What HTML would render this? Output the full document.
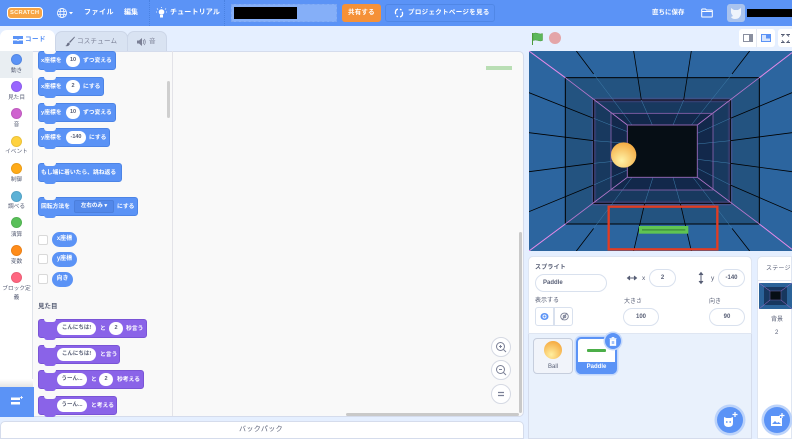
<!DOCTYPE html>
<html lang="ja"><head><meta charset="utf-8">
<style>
html,body{margin:0;padding:0;width:792px;height:439px;overflow:hidden;background:#e5efff}
body{position:relative;font-family:"Liberation Sans","Noto Sans CJK JP",sans-serif;color:#575e75;filter:blur(.3px)}
div,span.a{position:absolute;box-sizing:border-box}
.t{position:absolute;white-space:nowrap;line-height:10px;height:10px}
svg{position:absolute;overflow:visible}
.h{color:#fff;font-size:7px;font-weight:700;top:8px;letter-spacing:.5px}
.c{border-radius:50%;width:11px;height:11px;left:11px;border:1px solid rgba(0,0,0,.08)}
.l{font-size:5.700px;width:33px;left:0;text-align:center;color:#575e75}
.b{left:38px;height:19px;background:#5b93f6;border-radius:3px;border:1px solid #4c84e6;color:#fff;font-size:5.800px;font-weight:700}
.b:before{content:"";position:absolute;left:5px;top:-1px;width:12px;height:3px;background:#f9f9f9;border-radius:0 0 3px 3px}
.b:after{content:"";position:absolute;left:5px;bottom:-3px;width:12px;height:3px;background:#5b93f6;border-radius:0 0 4px 4px}
.p{background:#8a63e8;border-color:#7a54d6}
.p:after{background:#8a63e8}
.i{position:absolute;background:#fff;border-radius:7px;height:13px;top:2px;color:#575e75;font-size:5.500px;text-align:center;line-height:13px;font-weight:700}
.x{position:absolute;top:4px;line-height:10px;white-space:nowrap}
.cb{left:38px;width:10px;height:10px;background:#fff;border:1px solid #d9d9d9;border-radius:2px}
.r{left:52px;height:15px;background:#5b93f6;border-radius:8px;color:#fff;font-size:6px;font-weight:700;text-align:center;line-height:15px}
.z{left:491px;width:20px;height:20px;border-radius:50%;background:#fff;border:1px solid #d5d9e3}
.in{background:#fff;border:1px solid #d9e1ee;border-radius:9px;text-align:center;font-size:6px;line-height:16px;color:#575e75}
</style></head><body>

<!-- header -->
<div style="left:0;top:0;width:792px;height:26px;background:#5b93f6"></div>
<div style="left:7px;top:7px;width:36px;height:12px;background:#f7a444;border:1.500px solid #fff;border-radius:4px"></div>
<span class="t" style="left:10px;top:8px;font-size:5.800px;font-weight:700;color:#fff6e0;letter-spacing:.2px">SCRATCH</span>
<svg style="left:57px;top:8px" width="16" height="11" viewBox="0 0 16 11" fill="none" stroke="#fff" stroke-width=".8"><circle cx="5" cy="5" r="4.600"/><ellipse cx="5" cy="5" rx="2" ry="4.600"/><path d="M.5 3.500h9M.5 6.500h9"/><path d="M12 4h4l-2 2.400z" fill="#fff" stroke="none"/></svg>
<span class="t h" style="left:84px">ファイル</span>
<span class="t h" style="left:124px;letter-spacing:0">編集</span>
<div style="left:149px;top:0;width:0;height:26px;border-left:1px dotted #4a82e2"></div>
<svg style="left:156px;top:7px" width="11" height="12" viewBox="0 0 11 12"><circle cx="5.500" cy="5" r="2.800" fill="#fff"/><rect x="4" y="8" width="3" height="2.500" fill="#fff"/><path d="M5.500 0v1M1 1.500l1 1M10 1.500l-1 1M0 5h1M10 5h1" stroke="#fff" stroke-width=".8"/></svg>
<span class="t h" style="left:170px;letter-spacing:.15px">チュートリアル</span>
<div style="left:224px;top:0;width:0;height:26px;border-left:1px dotted #4a82e2"></div>
<div style="left:231px;top:4px;width:106px;height:18px;background:#85aff8;border:1px dashed #7aa5f2"></div>
<div style="left:234px;top:7px;width:63px;height:12px;background:#000"></div>
<div style="left:342px;top:4px;width:39px;height:18px;background:#f59138;border-radius:3px"></div>
<span class="t" style="left:348px;top:8px;font-size:6.500px;font-weight:700;color:#fff;letter-spacing:.2px">共有する</span>
<div style="left:385px;top:4px;width:110px;height:18px;border:1px solid #5087e6;border-radius:3px;background:#5b93f6"></div>
<svg style="left:394px;top:8px" width="10" height="10" viewBox="0 0 10 10" fill="none" stroke="#fff" stroke-width="1.300"><path d="M4 1.200C1.500 1.500 1 4 1.700 6.200M6 8.800c2.500-.3 3-2.800 2.300-5"/><path d="M6 1.200l1.500.8M4 8.800l-1.500-.8"/></svg>
<span class="t" style="left:408px;top:8px;font-size:6.500px;font-weight:700;color:#fff;letter-spacing:.32px">プロジェクトページを見る</span>
<span class="t h" style="left:652px;letter-spacing:0;font-size:6.500px">直ちに保存</span>
<svg style="left:701px;top:8px" width="12" height="10" viewBox="0 0 12 10" fill="none" stroke="#fff" stroke-width="1"><path d="M.7 1.800Q.7 1 1.500 1H4.500L5.500 2H10.500Q11.300 2 11.300 2.800V8.200Q11.300 9 10.500 9H1.500Q.7 9 .7 8.200ZM.7 3.500H11.300"/></svg>
<div style="left:727px;top:4px;width:18px;height:18px;background:#a9c3ee;border-radius:3px"></div>
<svg style="left:728px;top:5px" width="16" height="16" viewBox="0 0 16 16"><path d="M3 3l3 2h4l3-2v6q-1 5-6 5-3 0-4-2l2-1q-2-2-2-4z" fill="#eef3fb"/></svg>
<div style="left:747px;top:9px;width:45px;height:8px;background:#000"></div>

<!-- tabs -->
<div style="left:55px;top:31px;width:73px;height:21px;background:#d9e3f2;border:1px solid #ccd6e8;border-radius:7px 7px 0 0"></div>
<div style="left:127px;top:31px;width:40px;height:21px;background:#d9e3f2;border:1px solid #ccd6e8;border-radius:7px 7px 0 0"></div>
<div style="left:0;top:30px;width:55px;height:22px;background:#fff;border-radius:7px 7px 0 0"></div>
<svg style="left:13px;top:36px" width="10" height="8" viewBox="0 0 10 8"><path d="M0 0h10v3H6L5 4 4 3H0zM0 4.500h4l1 .8 1-.8h4V8H0z" fill="#5b93f6"/></svg>
<span class="t" style="left:25px;top:35px;font-size:6.500px;color:#5b93f6;letter-spacing:.5px;font-weight:700">コード</span>
<svg style="left:65px;top:36px" width="10" height="11" viewBox="0 0 10 11"><path d="M9.500.5L4 6 5 7l4.800-5.500zM3.500 6.500Q2 7 1.800 8.500 1.500 9.800.2 10q3 .8 4.300-1.200.6-1 .2-1.300z" fill="#6a7086"/></svg>
<span class="t" style="left:77px;top:37px;font-size:6.500px;color:#7b8096;letter-spacing:.25px">コスチューム</span>
<svg style="left:137px;top:38px" width="9" height="8" viewBox="0 0 9 8"><path d="M0 2.500h2L5 0v8L2 5.500H0z" fill="#7b8096"/><path d="M6 2q1.500 2 0 4M7.300 1q2 3 0 6" stroke="#7b8096" fill="none" stroke-width=".7"/></svg>
<span class="t" style="left:149px;top:37px;font-size:6.500px;color:#7b8096">音</span>

<!-- code area -->
<div style="left:0;top:51px;width:524px;height:366px;background:#f9f9f9;border:1px solid #d5dcec;border-radius:0 5px 5px 0"></div>
<div style="left:0;top:51px;width:33px;height:366px;background:#fff;border-right:1px solid #dfe3ea"></div>
<div style="left:0;top:51px;width:33px;height:27px;background:#e9eef2"></div>
<div style="left:172px;top:51px;width:1px;height:365px;background:#e3e3e8"></div>

<div class="c" style="top:54px;background:#5b93f6"></div><span class="t l" style="top:66px">動き</span>
<div class="c" style="top:81px;background:#9966ff"></div><span class="t l" style="top:93px">見た目</span>
<div class="c" style="top:108px;background:#cf63cf"></div><span class="t l" style="top:120px">音</span>
<div class="c" style="top:136px;background:#ffd23f"></div><span class="t l" style="top:147px">イベント</span>
<div class="c" style="top:163px;background:#ffab19"></div><span class="t l" style="top:175px">制御</span>
<div class="c" style="top:191px;background:#5cb1d6"></div><span class="t l" style="top:202px">調べる</span>
<div class="c" style="top:217px;background:#59c059"></div><span class="t l" style="top:230px">演算</span>
<div class="c" style="top:245px;background:#ff8c1a"></div><span class="t l" style="top:257px">変数</span>
<div class="c" style="top:272px;background:#ff6680"></div><span class="t l" style="top:284px">ブロック定</span><span class="t l" style="top:293px">義</span>

<!-- blocks -->
<div class="b" style="top:51px;width:78px"><span class="x" style="left:2px">x座標を</span><span class="i" style="left:27px;width:14px">10</span><span class="x" style="left:44px">ずつ変える</span></div>
<div class="b" style="top:77px;width:66px"><span class="x" style="left:2px">x座標を</span><span class="i" style="left:27px;width:14px">2</span><span class="x" style="left:44px">にする</span></div>
<div class="b" style="top:103px;width:78px"><span class="x" style="left:2px">y座標を</span><span class="i" style="left:27px;width:14px">10</span><span class="x" style="left:44px">ずつ変える</span></div>
<div class="b" style="top:128px;width:72px"><span class="x" style="left:2px">y座標を</span><span class="i" style="left:27px;width:20px">-140</span><span class="x" style="left:50px">にする</span></div>
<div class="b" style="top:163px;width:84px"><span class="x" style="left:2px;letter-spacing:-.02px">もし端に着いたら、跳ね返る</span></div>
<div class="b" style="top:197px;width:100px"><span class="x" style="left:2px">回転方法を</span><span class="a" style="left:35px;top:2px;width:40px;height:13px;background:#5288ea;border:1px solid #4c7fdc;border-radius:2px;line-height:11px;text-align:center;font-size:5.500px">左右のみ ▾</span><span class="x" style="left:78px">にする</span></div>

<div class="cb" style="top:235px"></div><div class="r" style="top:232px;width:25px">x座標</div>
<div class="cb" style="top:254px"></div><div class="r" style="top:252px;width:25px">y座標</div>
<div class="cb" style="top:274px"></div><div class="r" style="top:272px;width:21px">向き</div>

<span class="t" style="left:38px;top:302px;font-size:6.500px;font-weight:700;color:#575e75">見た目</span>

<div class="b p" style="top:319px;width:109px"><span class="i" style="left:18px;width:39px">こんにちは!</span><span class="x" style="left:61px">と</span><span class="i" style="left:70px;width:14px">2</span><span class="x" style="left:87px">秒言う</span></div>
<div class="b p" style="top:345px;width:82px"><span class="i" style="left:18px;width:39px">こんにちは!</span><span class="x" style="left:61px">と言う</span></div>
<div class="b p" style="top:370px;width:106px"><span class="i" style="left:18px;width:30px">うーん...</span><span class="x" style="left:52px">と</span><span class="i" style="left:60px;width:14px">2</span><span class="x" style="left:78px">秒考える</span></div>
<div class="b p" style="top:396px;width:79px"><span class="i" style="left:18px;width:30px">うーん...</span><span class="x" style="left:52px">と考える</span></div>

<div style="left:167px;top:81px;width:3px;height:37px;background:#cfcfcf;border-radius:2px"></div>
<div style="left:519px;top:232px;width:3px;height:181px;background:#c9c9c9;border-radius:2px"></div>
<div style="left:346px;top:413px;width:173px;height:3px;background:#c9c9c9;border-radius:2px"></div>
<div style="left:486px;top:66px;width:26px;height:4px;background:#b9deb4"></div>

<div class="z" style="top:337px"></div>
<svg style="left:494px;top:340px" width="14" height="14" viewBox="0 0 14 14" fill="none" stroke="#7b8096" stroke-width="1"><circle cx="6.500" cy="6.500" r="4"/><path d="M9.500 9.500l2.500 2.500M5 6.500h3M6.500 5v3"/></svg>
<div class="z" style="top:360px"></div>
<svg style="left:494px;top:363px" width="14" height="14" viewBox="0 0 14 14" fill="none" stroke="#7b8096" stroke-width="1"><circle cx="6.500" cy="6.500" r="4"/><path d="M9.500 9.500l2.500 2.500M5 6.500h3"/></svg>
<div class="z" style="top:384px"></div>
<svg style="left:494px;top:387px" width="14" height="14" viewBox="0 0 14 14" fill="none" stroke="#7b8096" stroke-width="1.200"><path d="M4 5.500h6M4 8.500h6"/></svg>

<div style="left:0;top:379px;width:33px;height:8px;background:linear-gradient(#fff,#e4e4e4)"></div>
<div style="left:0;top:387px;width:34px;height:30px;background:#5b93f6"></div>
<svg style="left:10px;top:396px" width="14" height="12" viewBox="0 0 14 12"><path d="M1 1.500h9v2.500H1zM1 6h9v2.500H1z" fill="#fff"/><path d="M11.500 0v3M10 1.500h3" stroke="#fff" stroke-width=".8"/></svg>

<!-- backpack -->
<div style="left:0;top:421px;width:524px;height:18px;background:#fff;border:1px solid #d5dcec;border-radius:5px 5px 0 0"></div>
<span class="t" style="left:239px;top:425px;font-size:7px;color:#575e75;letter-spacing:.4px">バックパック</span>

<!-- stage controls -->
<svg style="left:531px;top:32px" width="13" height="13" viewBox="0 0 13 13"><path d="M1.500 1v12" stroke="#4c9a3c" stroke-width="1"/><path d="M2 1.500q2.500-1 5 0t4.500 0v7q-2 1-4.500 0t-5 0z" fill="#5cb85c" stroke="#4c9a3c" stroke-width=".5"/></svg>
<div style="left:549px;top:32px;width:12px;height:12px;border-radius:50%;background:#e4a5a8"></div>
<div style="left:739px;top:29px;width:18px;height:18px;background:#fff;border-radius:3px 0 0 3px;border-right:1px solid #e5e9f2"></div>
<svg style="left:743px;top:34px" width="10" height="8" viewBox="0 0 10 8"><rect x=".5" y=".5" width="9" height="7" fill="#fff" stroke="#8a8f9f"/><rect x="6" y="1" width="3" height="6" fill="#8a8f9f"/></svg>
<div style="left:757px;top:29px;width:18px;height:18px;background:#fff;border-radius:0 3px 3px 0"></div>
<svg style="left:761px;top:34px" width="10" height="8" viewBox="0 0 10 8"><rect x=".5" y=".5" width="9" height="7" fill="#d7e5fd" stroke="#5b93f6"/><rect x="5" y="1" width="4" height="3.500" fill="#5b93f6"/></svg>
<div style="left:778px;top:29px;width:14px;height:18px;background:#fff;border-radius:3px 0 0 3px"></div>
<svg style="left:781px;top:34px" width="9" height="9" viewBox="0 0 9 9" fill="none" stroke="#575e75" stroke-width="1"><path d="M0 .5h3L1 2.500M9 .5H6l2 2M0 8.500h3L1 6.500M9 8.500H6l2-2"/></svg>

<!-- stage -->
<div style="left:529px;top:51px;width:263px;height:200px;background:#2b6399;overflow:hidden">
<svg style="left:-1px;top:-1px" width="264" height="205" viewBox="0 0 792 615">
<defs><radialGradient id="bg" cx=".42" cy=".72" r=".75"><stop offset="0" stop-color="#fff2a6"/><stop offset="1" stop-color="#f4a83f"/></radialGradient>
<filter id="gl"><feGaussianBlur stdDeviation="3"/></filter></defs>
<rect width="792" height="615" fill="#2c659f"/>
<rect x="112" y="83" width="582" height="439" fill="#235380"/>
<rect x="197" y="150" width="410" height="310" fill="#18395f"/>
<rect x="249" y="190" width="306" height="230" fill="#12284b"/>
<g fill="none" stroke="#6f4f9a" stroke-width="6" filter="url(#gl)"><rect x="197" y="150" width="410" height="310"/></g>
<g stroke="#000" stroke-width="2.400" fill="none">
<path d="M145 3L197 72M317 3L340 150M490 3L467 150M665 3L612 72"/>
<path d="M3 128L197 205M3 248L197 272M3 365L197 340M3 485L197 405"/>
<path d="M792 128L607 205M792 248L607 272M792 365L607 340M792 485L607 405"/>
<path d="M145 603L197 535M317 603L350 460M490 603L457 460M665 603L612 535"/>
<rect x="112" y="83" width="582" height="439" stroke-width="3"/>
<rect x="197" y="150" width="410" height="310" stroke-width="3"/>
</g>
<g stroke="#3f7fae" stroke-width="1.500" fill="none">
<path d="M197 72L312 225M340 150L373 225M467 150L435 225M612 72L490 225"/>
<path d="M197 205L298 245M197 272L298 280M197 340L298 330M197 405L298 360"/>
<path d="M607 205L508 250M607 272L508 282M607 340L508 328M607 405L508 355"/>
<path d="M197 535L312 382M350 460L375 382M457 460L435 382M612 535L495 382"/>
</g>
<g stroke="#e68ae8" stroke-width="3" fill="none"><path d="M3 3L112 83M792 8L694 83M3 603L112 522M792 598L694 522"/></g>
<g stroke="#b577cc" stroke-width="2.500" fill="none"><path d="M112 83L298 225M694 83L508 225M112 522L298 382M694 522L508 382"/></g>
<rect x="249" y="190" width="306" height="230" fill="none" stroke="#8a63ae" stroke-width="2.500"/>
<rect x="298" y="225" width="210" height="157" fill="#060e15" stroke="#8a63ae" stroke-width="3"/>
<circle cx="287" cy="315" r="38" fill="url(#bg)"/>
<rect x="333" y="528" width="148" height="23" fill="#5fc452"/>
<rect x="342" y="537" width="130" height="5" fill="#44993f"/>
<rect x="242" y="470" width="326" height="128" fill="none" stroke="#e23c22" stroke-width="7"/>
</svg></div>

<!-- sprite panel -->
<div style="left:528px;top:256px;width:224px;height:183px;background:#e9f1fc;border:1px solid #d5dcec;border-radius:5px 5px 0 0"></div>
<div style="left:528px;top:256px;width:224px;height:78px;background:#fff;border:1px solid #dfe6f2;border-radius:5px 5px 0 0"></div>
<span class="t" style="left:535px;top:263px;font-size:6px;font-weight:700;color:#575e75;letter-spacing:.2px">スプライト</span>
<div class="in" style="left:535px;top:274px;width:72px;height:18px;text-align:left;padding-left:7px;font-weight:700">Paddle</div>
<svg style="left:627px;top:274px" width="10" height="8" viewBox="0 0 10 8"><path d="M.5 4h9M3 2L.5 4 3 6M7 2l2.500 2L7 6" stroke="#575e75" fill="#575e75" stroke-width="1"/></svg>
<span class="t" style="left:642px;top:274px;font-size:6.500px">x</span>
<div class="in" style="left:649px;top:269px;width:27px;height:18px;font-weight:700">2</div>
<svg style="left:697px;top:272px" width="8" height="12" viewBox="0 0 8 12"><path d="M4 .5v11M2 3l2-2.500L6 3M2 9l2 2.500L6 9" stroke="#575e75" fill="#575e75" stroke-width="1"/></svg>
<span class="t" style="left:711px;top:274px;font-size:6.500px">y</span>
<div class="in" style="left:718px;top:269px;width:27px;height:18px;font-weight:700">-140</div>
<span class="t" style="left:535px;top:296px;font-size:6px">表示する</span>
<span class="t" style="left:624px;top:297px;font-size:6px">大きさ</span>
<span class="t" style="left:709px;top:297px;font-size:6px">向き</span>
<div style="left:535px;top:307px;width:19px;height:19px;background:#fff;border:1px solid #d9e1ee;border-radius:3px 0 0 3px"></div>
<div style="left:554px;top:307px;width:19px;height:19px;background:#fff;border:1px solid #d9e1ee;border-radius:0 3px 3px 0"></div>
<svg style="left:540px;top:312px" width="9" height="9" viewBox="0 0 9 9"><ellipse cx="4.500" cy="4.500" rx="4" ry="3.500" fill="#5b93f6"/><circle cx="4.500" cy="4.500" r="2" fill="#fff"/><circle cx="4.500" cy="4.500" r="1.100" fill="#5b93f6"/></svg>
<svg style="left:560px;top:312px" width="9" height="9" viewBox="0 0 9 9" fill="none" stroke="#7b8096" stroke-width=".9"><ellipse cx="4.500" cy="4.500" rx="3.800" ry="3.400"/><circle cx="4.500" cy="4.500" r="1.300"/><path d="M7 1L2 8"/></svg>
<div class="in" style="left:623px;top:308px;width:36px;height:18px;font-weight:700">100</div>
<div class="in" style="left:709px;top:308px;width:36px;height:18px;font-weight:700">90</div>

<!-- sprite tiles -->
<div style="left:533px;top:338px;width:40px;height:36px;background:#f1f4fa;border:1px solid #c6cedd;border-radius:4px"></div>
<svg style="left:544px;top:341px" width="18" height="18" viewBox="0 0 18 18"><defs><radialGradient id="bs" cx=".4" cy=".75" r=".8"><stop offset="0" stop-color="#ffefa0"/><stop offset="1" stop-color="#f5a63c"/></radialGradient></defs><circle cx="9" cy="9" r="9" fill="url(#bs)"/></svg>
<span class="t" style="left:533px;top:362px;width:40px;text-align:center;font-size:6px">Ball</span>
<div style="left:576px;top:337px;width:41px;height:37px;background:#fff;border:2px solid #5b93f6;border-radius:5px;box-shadow:0 0 0 1.500px #c5d9fb"></div>
<div style="left:577px;top:362px;width:39px;height:12px;background:#5b93f6;border-radius:0 0 4px 4px"></div>
<span class="t" style="left:576px;top:362px;width:41px;text-align:center;font-size:6px;color:#fff;font-weight:700">Paddle</span>
<div style="left:587px;top:349px;width:19px;height:3px;background:#4cae49;border-radius:1px"></div>
<div style="left:605px;top:333px;width:16px;height:16px;background:#5b93f6;border-radius:50%;box-shadow:0 0 0 1.500px #c5d9fb"></div>
<svg style="left:609px;top:337px" width="8" height="9" viewBox="0 0 8 9"><path d="M.5 1.500h7M3 1.500V.5h2v1M1.200 2.500h5.600V8.500H1.200z" stroke="#fff" fill="#fff" stroke-width=".7"/><path d="M3.200 4v3M4.800 4v3" stroke="#5b93f6" stroke-width=".7"/></svg>

<div style="left:717px;top:407px;width:26px;height:26px;background:#5b93f6;border-radius:50%;box-shadow:0 0 0 2.500px #bcd3fa"></div>
<svg style="left:723px;top:412px" width="15" height="16" viewBox="0 0 15 16"><path d="M1 5l2.500 1h4L10 5v6q0 4-4.500 4T1 11z" fill="#fff"/><circle cx="3.800" cy="10" r=".9" fill="#5b93f6"/><circle cx="7.200" cy="10" r=".9" fill="#5b93f6"/><path d="M12 0v5M9.500 2.500h5" stroke="#fff" stroke-width="1.200"/></svg>

<!-- stage panel -->
<div style="left:757px;top:256px;width:35px;height:183px;background:#fff;border:1px solid #dfe6f2;border-radius:5px 0 0 0"></div>
<div style="left:757px;top:280px;width:35px;height:1px;background:#e3e8f2"></div>
<span class="t" style="left:766px;top:264px;font-size:6px;letter-spacing:.2px">ステージ</span>
<svg style="left:759px;top:283px" width="33" height="26" viewBox="0 0 33 26"><rect width="33" height="26" fill="#2b6399"/><rect x="5" y="4" width="23" height="18" fill="#17375f"/><rect x="11" y="8" width="11" height="9" fill="#060e15" stroke="#5f5a9a" stroke-width=".6"/><path d="M0 0l11 8M33 0L22 8M0 26l11-9M33 26L22 17" stroke="#b06fd0" stroke-width=".5"/></svg>
<span class="t" style="left:771px;top:315px;font-size:6px">背景</span>
<span class="t" style="left:775px;top:328px;font-size:6px">2</span>
<div style="left:764px;top:407px;width:26px;height:26px;background:#5b93f6;border-radius:50%;box-shadow:0 0 0 2.500px #bcd3fa"></div>
<svg style="left:770px;top:413px" width="15" height="14" viewBox="0 0 15 14"><path d="M1 3h9v2h2v8H1z" fill="#fff"/><path d="M2 11l3-3 2 2 1.500-1L11 11z" fill="#5b93f6"/><path d="M12 0v5M9.500 2.500h5" stroke="#fff" stroke-width="1.200"/></svg>
</body></html>
